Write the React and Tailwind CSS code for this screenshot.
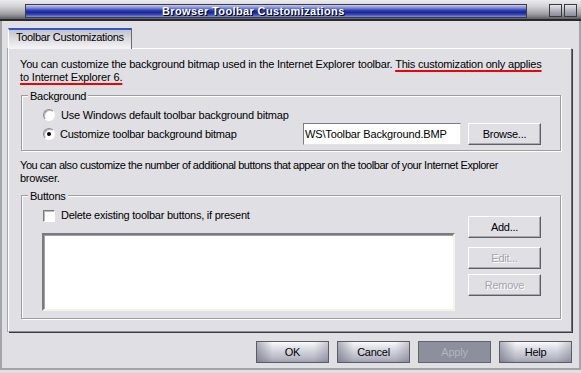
export default function App() {
  const classicBtn =
    "w-[73px] h-[22px] shrink-0 flex items-center justify-center border border-t-white border-l-white border-r-[#5e5e66] border-b-[#5e5e66] shadow-[inset_-1px_-1px_0_#a8a8b0] bg-[#e0dfe4]";
  const skinBtn =
    "w-[73px] h-[22px] flex items-center justify-center border border-[#5c5c64] bg-[linear-gradient(to_right,rgba(90,90,110,0.45),rgba(90,90,110,0)_22%,rgba(90,90,110,0)_80%,rgba(90,90,110,0.3)),linear-gradient(to_bottom,#fafafc,#e6e6ec_22%,#cbccd6_55%,#b4b5c1_85%,#9d9eab)]";
  return (
    <div className="w-[581px] h-[373px] bg-[#dfdfe4] flex flex-col font-['Liberation_Sans',Arial,sans-serif] text-[11px] leading-[13px] tracking-[-0.25px] text-black overflow-hidden select-none">
      {/* Title bar */}
      <div className="h-[21px] shrink-0 flex items-start pt-[4px] pl-[25px] pr-[4px] border-b-2 border-[#2a2a2e] bg-[linear-gradient(to_bottom,#ececee,#d2d2d6_35%,#9c9ca2_75%,#5e5e64)]">
        <div className="w-[502px] h-[14px] border border-[#3c3c44] flex items-center pl-[136px] bg-[linear-gradient(to_bottom,#c4cbef,#7c88d8_25%,#3040b0_45%,#1a2890_62%,#3848b8_80%,#8890d8)]">
          <span className="font-bold text-white text-[11px] leading-[12px] tracking-[0.37px] [text-shadow:1px_1px_0_#000]">
            Browser Toolbar Customizations
          </span>
        </div>
        <div className="ml-auto flex gap-[2px]">
          <div className="w-[13px] h-[13px] border border-[#3a3a40] bg-[linear-gradient(to_bottom,#e4e4ea,#b4b4c0_50%,#8a8a98)]" />
          <div className="w-[13px] h-[13px] border border-[#3a3a40] bg-[linear-gradient(to_bottom,#e4e4ea,#b4b4c0_50%,#8a8a98)]" />
        </div>
      </div>

      {/* Body */}
      <div className="flex-1 flex flex-col border-l-2 border-r-2 border-b-2 border-[#a4a4ab] pl-[6px] pr-[7px] pt-[7px] pb-[5px] mb-[3px]">
        {/* Tab */}
        <div className="relative z-10 w-[124px] h-[21px] -mb-[1px] border-t-2 border-t-[#3355cc] border-l border-l-white border-r border-r-[#6a6a72] bg-[linear-gradient(to_bottom,#c4c4cc,#f6f6f8)] pl-[7px] pt-[1px] tracking-[-0.3px]">
          Toolbar Customizations
        </div>

        {/* Panel */}
        <div className="h-[284px] shrink-0 flex flex-col border border-t-white border-l-white border-r-[#6e6e76] border-b-[#8c8c94] shadow-[1px_1px_0_#3c3c44,-1px_0_0_#a4a4ac] pl-[11px] pr-[10px] pt-[9px]">
          <p className="whitespace-nowrap">
            <span className="tracking-[-0.19px]">
              You can customize the background bitmap used in the Internet Explorer toolbar.{" "}
              <span className="underline decoration-[#ee0000] decoration-2 underline-offset-[2px]">
                This customization only applies
              </span>
            </span>
            <br />
            <span className="underline decoration-[#ee0000] decoration-2 underline-offset-[2px] tracking-[-0.15px]">
              to Internet Explorer 6.
            </span>
          </p>

          {/* Background group */}
          <div className="relative mt-[11px] ml-[1px] border border-[#9c9ca4] shadow-[inset_1px_1px_0_#fff,1px_1px_0_#fff] pt-[12px] pb-[5px] pl-[21px] pr-[19px]">
            <span className="absolute -top-[6px] left-[6px] px-[2px] bg-[#dfdfe4]">Background</span>
            <div className="h-[14px] flex items-center gap-[6px]">
              <span className="w-[12px] h-[12px] rounded-full border border-t-[#8a8a92] border-l-[#8a8a92] border-r-white border-b-white bg-white shadow-[inset_1px_1px_0_#b4b4bc]" />
              <span className="tracking-[-0.2px]">Use Windows default toolbar background bitmap</span>
            </div>
            <div className="mt-[1px] h-[22px] flex items-center">
              <span className="w-[12px] h-[12px] rounded-full border border-t-[#8a8a92] border-l-[#8a8a92] border-r-white border-b-white bg-white shadow-[inset_1px_1px_0_#b4b4bc] flex items-center justify-center">
                <span className="w-[4px] h-[4px] rounded-full bg-black" />
              </span>
              <span className="ml-[5px]">Customize toolbar background bitmap</span>
              <div className="ml-auto w-[158px] h-[22px] flex items-center overflow-hidden whitespace-nowrap bg-white border border-t-[#7c7c84] border-l-[#7c7c84] border-r-[#e4e4e8] border-b-[#e4e4e8] pl-[1px] tracking-[-0.15px]">
                {"WS\\Toolbar Background.BMP"}
              </div>
              <div className={classicBtn + " ml-[7px]"}>Browse...</div>
            </div>
          </div>

          <p className="mt-[8px] whitespace-nowrap">
            <span className="tracking-[-0.44px]">
              You can also customize the number of additional buttons that appear on the toolbar of your Internet Explorer
            </span>
            <br />
            browser.
          </p>

          {/* Buttons group */}
          <div className="relative mt-[10px] ml-[1px] border border-[#9c9ca4] shadow-[inset_1px_1px_0_#fff,1px_1px_0_#fff] pt-[13px] pb-[7px] pl-[20px] pr-[19px] flex gap-[13px]">
            <span className="absolute -top-[6px] left-[6px] px-[2px] bg-[#dfdfe4]">Buttons</span>
            <div className="w-[413px] flex flex-col">
              <div className="h-[13px] flex items-center gap-[6px] ml-[1px]">
                <span className="w-[12px] h-[12px] border border-t-[#7a7a82] border-l-[#7a7a82] border-r-white border-b-white bg-white shadow-[inset_1px_1px_0_#b8b8c0]" />
                <span>Delete existing toolbar buttons, if present</span>
              </div>
              <div className="mt-[11px] h-[78px] bg-white border-2 border-t-[#7a7a80] border-l-[#7a7a80] border-r-[#f4f3ea] border-b-[#f4f3ea] shadow-[inset_1px_1px_0_#a0a0a6]" />
            </div>
            <div className="flex flex-col pt-[7px]">
              <div className={classicBtn}>Add...</div>
              <div className={classicBtn + " mt-[9px] text-[#a4a4ac] [text-shadow:1px_1px_0_#fff]"}>Edit...</div>
              <div className={classicBtn + " mt-[5px] text-[#a4a4ac] [text-shadow:1px_1px_0_#fff]"}>Remove</div>
            </div>
          </div>
        </div>

        {/* Bottom buttons */}
        <div className="mt-[9px] h-[22px] flex justify-end gap-[8px]">
          <div className={skinBtn}>OK</div>
          <div className={skinBtn}>Cancel</div>
          <div className="w-[73px] h-[22px] flex items-center justify-center border border-[#63636b] bg-[#8d8f9d] text-[#b2b4be]">
            Apply
          </div>
          <div className={skinBtn}>Help</div>
        </div>
      </div>
    </div>
  );
}
